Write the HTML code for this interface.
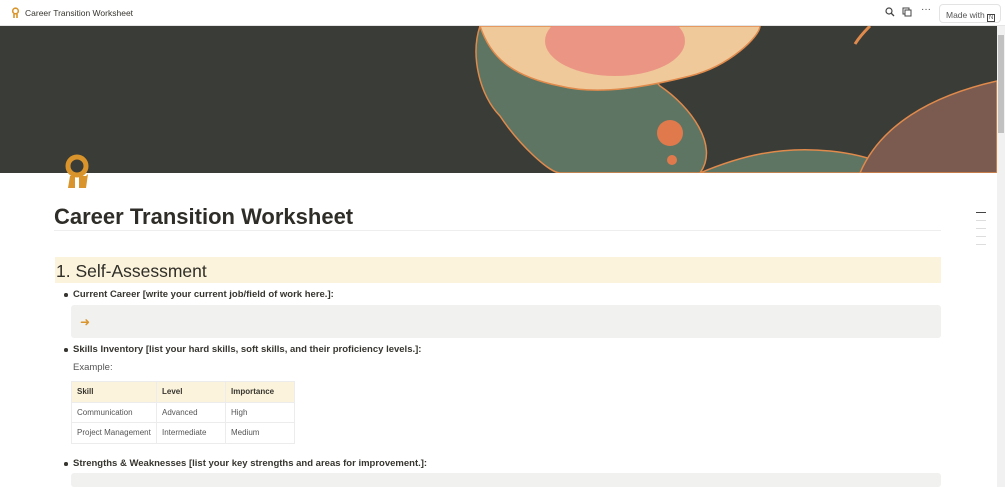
<!DOCTYPE html>
<html style="width:1005px;height:487px;overflow:hidden"><head><meta charset="utf-8"><style>
*{margin:0;padding:0;box-sizing:border-box}
body{width:1005px;height:487px;overflow:hidden;background:#fff;font-family:"Liberation Sans",sans-serif;color:#37352f;position:relative}
.top{position:absolute;left:0;top:0;width:1005px;height:26px;background:#fff;border-bottom:1px solid #e5e5e5}
.top .t{position:absolute;left:25px;top:8px;font-size:8.5px;color:#37352f}
.made{position:absolute;left:939px;top:4px;width:62px;height:19px;border:1px solid #e3e3e3;border-radius:4px;font-size:8.5px;color:#555;padding:5px 0 0 6px;white-space:nowrap}
.cover{position:absolute;left:0;top:26px;width:997px;height:147px;background:#3a3c37;overflow:hidden}
.sb{position:absolute;left:997px;top:26px;width:8px;height:461px;background:#f1f1f1}
.sb div{position:absolute;left:1px;top:9px;width:6px;height:98px;background:#c1c1c1}
h1{position:absolute;left:54px;top:204px;font-size:22px;font-weight:bold;color:#2f2d28}
.hr{position:absolute;left:54px;top:230px;width:887px;height:1px;background:#eee}
.h2{position:absolute;left:55px;top:257px;width:886px;height:26px;background:#fbf3db;font-size:17.5px;padding:4px 0 0 1px;color:#2f2d28}
.li{position:absolute;left:73px;font-size:9.5px;font-weight:bold}
.li:before{content:"";position:absolute;left:-9px;top:4px;width:3.5px;height:3.5px;border-radius:50%;background:#37352f}
.call{position:absolute;left:71px;width:870px;height:33px;background:#f1f1ef;border-radius:3px}
.arr{position:absolute;left:9px;top:10px;color:#d9942b;font-size:12px}
table{position:absolute;left:71px;top:381px;border-collapse:collapse;font-size:8px;color:#555}
td{border:1px solid #ececec;height:20.5px;padding:0 5px}
tr:first-child td{background:#fbf3db;font-weight:bold;color:#37352f}
.toc{position:absolute;left:976px;width:10px;height:1px;background:#ddd}
</style></head><body>
<div class="top"><svg style="position:absolute;left:11px;top:7px" width="9" height="12" viewBox="0 0 9 12"><circle cx="4.5" cy="4" r="2.8" fill="none" stroke="#d9942b" stroke-width="1.6"/><path d="M3 7v4M6 7v4" stroke="#d9942b" stroke-width="1.6"/></svg><span class="t">Career Transition Worksheet</span>
<svg style="position:absolute;left:885px;top:7px" width="10" height="10"><circle cx="4" cy="4" r="3" fill="none" stroke="#444" stroke-width="1.2"/><path d="M6 6l3 3" stroke="#444" stroke-width="1.3"/></svg>
<svg style="position:absolute;left:902px;top:7px" width="10" height="10"><rect x="1" y="1" width="6" height="6" fill="none" stroke="#444"/><rect x="3" y="3" width="6" height="6" fill="#fff" stroke="#444"/></svg>
<span style="position:absolute;left:921px;top:4px;font-size:10px;color:#444">···</span>
<div class="made">Made with <span style="display:inline-block;width:8px;height:8px;border:1px solid #444;vertical-align:-1px;font-size:6px;text-align:center;line-height:7px">N</span></div></div>
<div class="cover"><svg width="997" height="147" viewBox="0 0 997 147">
<path d="M480 0 C470 30,480 70,500 90 C520 120,550 147,560 147 L700 147 C720 120,690 80,660 60 C640 40,640 20,640 0Z" fill="#5d7562" stroke="#e08a4c" stroke-width="1.5"/>
<path d="M480 0 C490 30,510 50,560 60 C600 70,650 60,690 50 C730 40,760 10,760 0Z" fill="#f0c99a" stroke="#e08a4c" stroke-width="1.5"/>
<ellipse cx="615" cy="15" rx="70" ry="35" fill="#ea8a80" opacity=".8"/>
<circle cx="670" cy="107" r="13" fill="#e07a4c"/><circle cx="672" cy="134" r="5" fill="#e07a4c"/>
<path d="M700 147 C740 130,780 120,830 125 C880 130,900 147,900 147Z" fill="#5d7562" stroke="#e08a4c" stroke-width="1.5"/>
<path d="M860 147 C880 100,930 70,997 55 L997 147Z" fill="#7b5b50" stroke="#e08a4c" stroke-width="1.5"/>
<path d="M855 18 C860 10,865 5,870 0" stroke="#e08a4c" stroke-width="3" fill="none"/>
</svg></div>
<div class="sb"><div></div></div>
<svg style="position:absolute;left:64px;top:154px" width="28" height="36" viewBox="0 0 28 36"><circle cx="13" cy="12" r="9" fill="none" stroke="#d9942b" stroke-width="5"/><path d="M4 34 L6 22 H11 V34Z M15 34 V22 H22 L24 20 L22 34Z" fill="#d9942b"/></svg>
<h1>Career Transition Worksheet</h1><div class="hr"></div>
<div class="toc" style="top:212px;background:#444"></div><div class="toc" style="top:220px"></div><div class="toc" style="top:228px"></div><div class="toc" style="top:236px"></div><div class="toc" style="top:244px"></div>
<div class="h2">1. Self-Assessment</div>
<div class="li" style="top:289px">Current Career [write your current job/field of work here.]:</div>
<div class="call" style="top:305px"><span class="arr">➜</span></div>
<div class="li" style="top:344px">Skills Inventory [list your hard skills, soft skills, and their proficiency levels.]:</div>
<div style="position:absolute;left:73px;top:362px;font-size:9.5px;color:#555">Example:</div>
<table><tr><td style="width:85px">Skill</td><td style="width:69px">Level</td><td style="width:69px">Importance</td></tr>
<tr><td>Communication</td><td>Advanced</td><td>High</td></tr>
<tr><td>Project Management</td><td>Intermediate</td><td>Medium</td></tr></table>
<div class="li" style="top:458px">Strengths &amp; Weaknesses [list your key strengths and areas for improvement.]:</div>
<div class="call" style="top:473px;height:14px"></div>
</body></html>
